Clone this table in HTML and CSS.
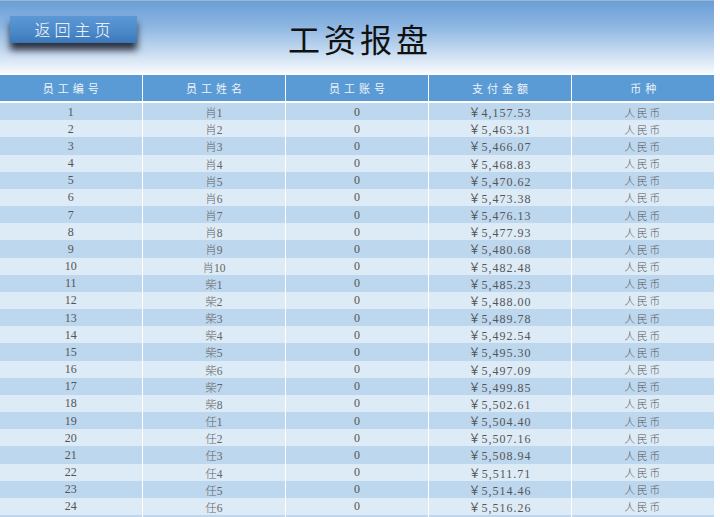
FILE: index.html
```html
<!DOCTYPE html>
<html lang="zh">
<head>
<meta charset="utf-8">
<link rel="stylesheet" href="styles.css">
</head>
<body>
<div class="page">
  <div class="band">
    <div class="band-left"><button class="home-btn">返回主页</button></div>
    <h1 class="title">工资报盘</h1>
    <div></div>
  </div>
  <div class="table" id="table">
    <div class="row head">
      <div class="cell">员工编号</div>
      <div class="cell">员工姓名</div>
      <div class="cell">员工账号</div>
      <div class="cell">支付金额</div>
      <div class="cell">币种</div>
    </div>
  </div>
</div>
<script src="app.js"></script>
</body>
</html>
```
FILE: app.js
```js
const data = [
  ["肖1","4,157.53"],["肖2","5,463.31"],["肖3","5,466.07"],["肖4","5,468.83"],
  ["肖5","5,470.62"],["肖6","5,473.38"],["肖7","5,476.13"],["肖8","5,477.93"],
  ["肖9","5,480.68"],["肖10","5,482.48"],["柴1","5,485.23"],["柴2","5,488.00"],
  ["柴3","5,489.78"],["柴4","5,492.54"],["柴5","5,495.30"],["柴6","5,497.09"],
  ["柴7","5,499.85"],["柴8","5,502.61"],["任1","5,504.40"],["任2","5,507.16"],
  ["任3","5,508.94"],["任4","5,511.71"],["任5","5,514.46"],["任6","5,516.26"]
];
const table = document.getElementById("table");
const cls = ["num", "name", "num", "money", "cur"];
data.forEach((d, i) => {
  const row = document.createElement("div");
  row.className = "row " + (i % 2 === 0 ? "odd" : "even");
  const cells = [String(i + 1), d[0], "0", "￥" + d[1], "人民币"];
  cells.forEach((t, j) => {
    const c = document.createElement("div");
    c.className = "cell " + cls[j];
    c.textContent = t;
    row.appendChild(c);
  });
  table.appendChild(row);
});
const tail = document.createElement("div");
tail.className = "row odd";
for (let j = 0; j < 5; j++) {
  const c = document.createElement("div");
  c.className = "cell";
  tail.appendChild(c);
}
table.appendChild(tail);
```
FILE: styles.css
```css
html, body {
  margin: 0;
  padding: 0;
  overflow: hidden;
  background: #fff;
}
.page {
  width: 714px;
  height: 517px;
  overflow: hidden;
}
.band {
  height: 73px;
  display: grid;
  grid-template-columns: 1fr auto 1fr;
  align-items: start;
  background: linear-gradient(to bottom, #6a9fd6 0%, #8db6e2 35%, #c5daf0 70%, #f6f9fd 100%);
  border-top: 1px solid #9fb6cc;
  box-sizing: border-box;
  margin-bottom: 2px;
}
.band-left {
  padding: 15px 0 0 10px;
}
.home-btn {
  width: 127px;
  height: 27px;
  border: none;
  padding: 0 0 0 2px;
  background: linear-gradient(to bottom, #5d98d6 0%, #4a88c8 60%, #3b78b9 100%);
  color: #fff;
  font-family: "Noto Sans CJK SC", sans-serif;
  font-size: 16px;
  font-weight: 300;
  letter-spacing: 4px;
  line-height: 27px;
  box-shadow: 0 7px 7px rgba(20, 20, 30, 0.85);
}
.title {
  margin: 17px 0 0 6px;
  font-family: "Noto Sans CJK SC", sans-serif;
  font-weight: 400;
  font-size: 32px;
  letter-spacing: 4px;
  line-height: 40px;
  color: #111;
}
.table {
  display: flex;
  flex-direction: column;
  gap: 1px;
}
.row {
  display: grid;
  grid-template-columns: repeat(5, 1fr);
  column-gap: 1.5px;
  height: 16.18px;
}
.row.head {
  height: 26px;
  margin-bottom: 1px;
}
.cell {
  display: flex;
  align-items: center;
  justify-content: center;
  font-size: 11px;
  color: #555;
  font-family: "Liberation Serif", "Noto Sans CJK SC", serif;
  white-space: nowrap;
}
.head .cell {
  background: #5b9bd5;
  color: #eef4fb;
  font-family: "Noto Sans CJK SC", sans-serif;
  font-size: 11px;
  letter-spacing: 4px;
  padding-left: 4px;
}
.odd .cell { background: #bdd7ee; }
.even .cell { background: #ddebf7; }
.num { font-size: 12px; }
.name {
  font-size: 11.5px;
  color: #666;
  font-family: "Liberation Serif", "Noto Sans CJK SC", serif;
  font-weight: 300;
}
.money {
  font-size: 12px;
  letter-spacing: 1px;
}
.cur {
  font-family: "Noto Sans CJK SC", sans-serif;
  font-size: 10.5px;
  font-weight: 300;
  color: #555;
  letter-spacing: 2px;
}
```
